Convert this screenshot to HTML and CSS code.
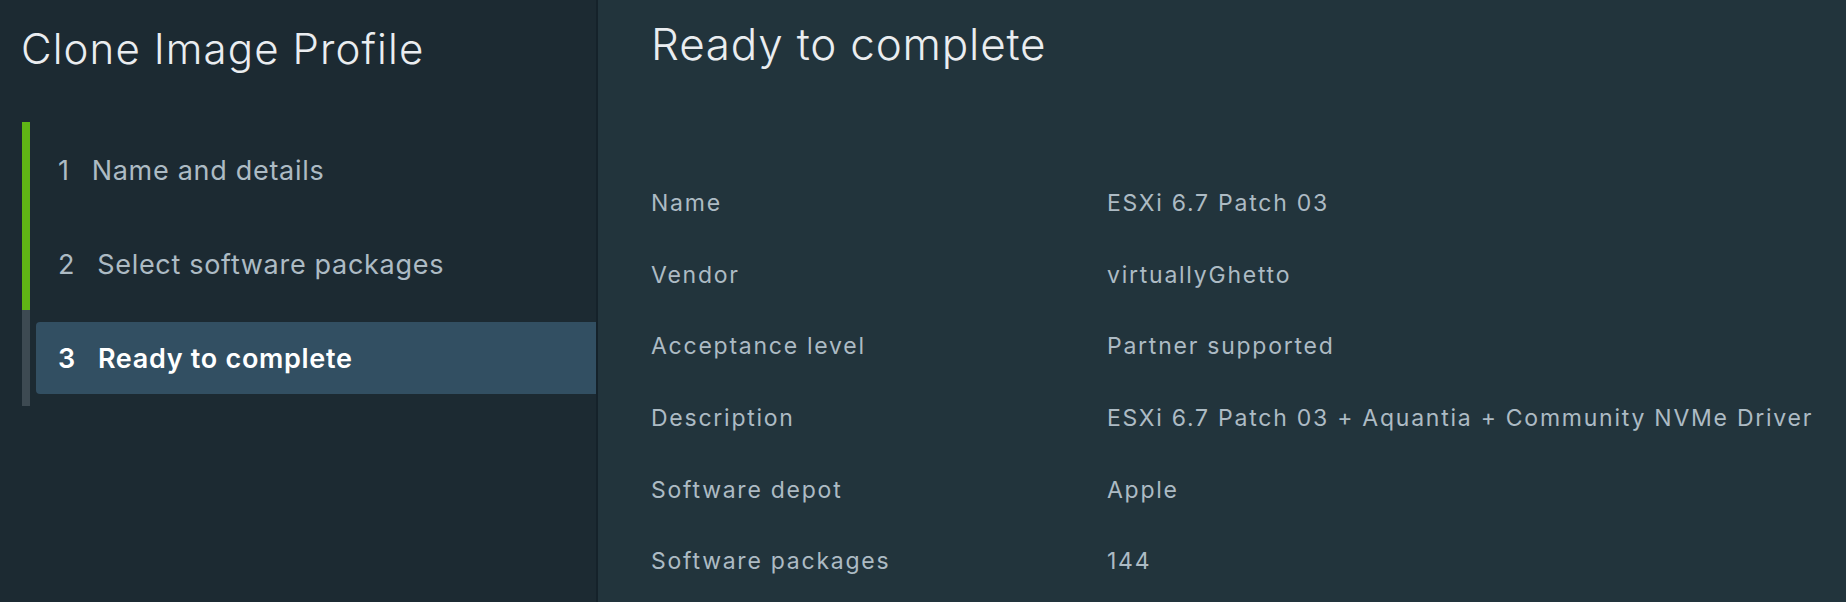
FILE: index.html
```html
<!DOCTYPE html>
<html lang="en">
<head>
<meta charset="utf-8">
<title>Clone Image Profile</title>
<link rel="stylesheet" href="styles.css">
</head>
<body>
<div class="wizard">
  <aside class="sidebar">
    <h2 class="wizard-title">Clone Image Profile</h2>
    <ol class="steps">
      <li class="step done"><span class="step-btn"><span class="num">1</span>Name and details</span></li>
      <li class="step done"><span class="step-btn"><span class="num">2</span>Select software packages</span></li>
      <li class="step current"><span class="step-btn active"><span class="num">3</span>Ready to complete</span></li>
    </ol>
  </aside>
  <main class="content">
    <h3 class="page-title">Ready to complete</h3>
    <dl class="summary">
      <div class="row"><dt>Name</dt><dd>ESXi 6.7 Patch 03</dd></div>
      <div class="row"><dt>Vendor</dt><dd>virtuallyGhetto</dd></div>
      <div class="row"><dt>Acceptance level</dt><dd>Partner supported</dd></div>
      <div class="row"><dt>Description</dt><dd>ESXi 6.7 Patch 03 + Aquantia + Community NVMe Driver</dd></div>
      <div class="row"><dt>Software depot</dt><dd>Apple</dd></div>
      <div class="row"><dt>Software packages</dt><dd>144</dd></div>
    </dl>
  </main>
</div>
</body>
</html>
```
FILE: styles.css
```css
html, body {
  margin: 0;
  padding: 0;
  height: 100%;
  overflow: hidden;
}
body {
  font-family: Inter, "Open Sans", sans-serif;
  background: #22343c;
  color: #adbbc4;
}
.wizard {
  display: flex;
  height: 602px;
}
.sidebar {
  width: 596px;
  flex: none;
  background: #1c2a32;
  border-right: 2px solid #15222a;
}
.wizard-title {
  margin: 0;
  padding: 24px 0 0 21px;
  font-size: 42px;
  line-height: 50px;
  font-weight: 300;
  letter-spacing: 1.1px;
  color: #eaedf0;
}
.steps {
  list-style: none;
  margin: 48px 0 0 22px;
  padding: 0;
}
.step {
  border-left: 8px solid #3d4a52;
  padding: 12px 0 10px 6px;
}
.step.done {
  border-left-color: #60b515;
}
.step.current {
  padding-bottom: 12px;
}
.step-btn {
  display: flex;
  align-items: center;
  height: 72px;
  padding-left: 22px;
  font-size: 27px;
  letter-spacing: 0.7px;
  color: #adbbc4;
  border-radius: 4px 0 0 4px;
}
.step-btn.active {
  background: #324f62;
  color: #ffffff;
  font-weight: 600;
}
.num {
  margin-right: 22px;
}
.content {
  flex: 1;
  padding-left: 53px;
}
.page-title {
  margin: 0;
  padding-top: 18px;
  font-size: 44px;
  line-height: 53px;
  font-weight: 300;
  letter-spacing: 0.8px;
  color: #eaedf0;
}
.summary {
  margin: 96px 0 0;
}
.row {
  display: flex;
  align-items: center;
  height: 71.7px;
  font-size: 23px;
  letter-spacing: 1.75px;
}
.row dt {
  width: 456px;
  flex: none;
}
.row dd {
  margin: 0;
}
```
